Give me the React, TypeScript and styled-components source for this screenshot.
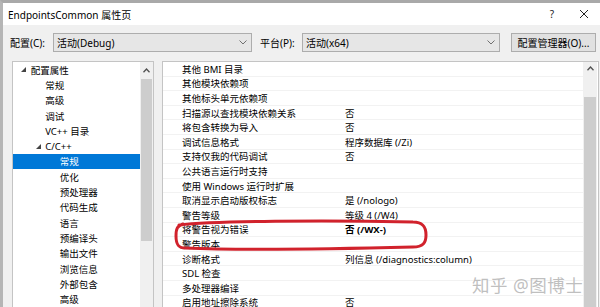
import React from 'react';
import styled, { createGlobalStyle } from 'styled-components';

const GlobalStyle = createGlobalStyle`
  html, body {
    margin: 0;
    padding: 0;
    overflow: hidden;
    background: #d9d9d9;
  }
  * {
    box-sizing: border-box;
  }
`;

const FONT = `"Noto Sans", "Noto Sans CJK SC", sans-serif`;

const Window = styled.div`
  position: relative;
  width: 600px;
  height: 307px;
  overflow: hidden;
  background: #f0f0f0;
  border-top: 3px solid #a9a9a9;
  border-left: 3px solid #b5b5b5;
  font-family: ${FONT};
  color: #000;
`;

const TitleBar = styled.div`
  height: 22px;
  background: #fff;
  display: flex;
  align-items: center;
  padding-left: 5px;
  font-size: 10px;
`;

const Title = styled.span`
  flex: 1;
`;

const TitleButton = styled.span`
  width: 32px;
  display: flex;
  justify-content: center;
  align-items: center;
  font-size: 10px;
  color: #222;
`;

const ConfigBar = styled.div`
  display: flex;
  align-items: center;
  padding: 8px 0 0 7px;
  height: 27px;
  font-size: 10px;
`;

const Label = styled.span<{ $w: number; $ml?: number }>`
  width: ${p => p.$w}px;
  margin-left: ${p => p.$ml || 0}px;
  white-space: nowrap;
`;

const Select = styled.div<{ $w: number }>`
  width: ${p => p.$w}px;
  height: 19px;
  background: #e6e6e6;
  border: 1px solid #adadad;
  display: flex;
  align-items: center;
  padding: 0 4px 0 3px;
  white-space: nowrap;
`;

const SelectText = styled.span`
  flex: 1;
`;

const Button = styled.div`
  width: 85px;
  height: 19px;
  margin-left: 11px;
  background: #e1e1e1;
  border: 1px solid #adadad;
  display: flex;
  align-items: center;
  justify-content: center;
  white-space: nowrap;
`;

const Main = styled.div`
  display: flex;
  gap: 8px;
  margin-top: 9px;
  padding-left: 9px;
`;

const Panel = styled.div<{ $w: number }>`
  width: ${p => p.$w}px;
  height: 260px;
  background: #fff;
  border: 1px solid #c4c4c4;
  display: flex;
  font-size: 9.5px;
`;

const TreeList = styled.div`
  width: 127px;
`;

const TreeRow = styled.div<{ $level: number; $selected?: boolean }>`
  height: 15.3px;
  display: flex;
  align-items: center;
  padding-left: ${p => 8 + p.$level * 14.5}px;
  background: ${p => (p.$selected ? '#0078d7' : 'transparent')};
  color: ${p => (p.$selected ? '#fff' : '#000')};
  white-space: nowrap;
`;

const Expander = styled.span`
  width: 9.7px;
  display: flex;
  align-items: center;
`;

const ScrollBar = styled.div<{ $w: number }>`
  width: ${p => p.$w}px;
  background: #f0f0f0;
  display: flex;
  flex-direction: column;
`;

const ScrollArrow = styled.div`
  height: 17px;
  display: flex;
  align-items: center;
  justify-content: center;
`;

const Thumb = styled.div<{ $top: number; $h: number }>`
  margin: ${p => p.$top}px 1px 0 1px;
  height: ${p => p.$h}px;
  background: #cdcdcd;
`;

const GridBody = styled.div`
  width: 420px;
`;

const GridRow = styled.div`
  height: 14.6px;
  display: flex;
  align-items: center;
  border-bottom: 1px solid #f2f2f2;
  white-space: nowrap;
`;

const NameCell = styled.span`
  width: 182px;
  padding-left: 19px;
`;

const ValueCell = styled.span<{ $bold?: boolean }>`
  flex: 1;
  font-weight: ${p => (p.$bold ? 700 : 400)};
`;

const Highlight = styled.svg`
  position: absolute;
  left: 170px;
  top: 214px;
`;

const Watermark = styled.div`
  position: absolute;
  left: 469px;
  top: 269px;
  font-size: 17.5px;
  color: rgba(170, 170, 170, 0.75);
  text-shadow: 0 0 2px rgba(255, 255, 255, 0.9);
  white-space: nowrap;
  letter-spacing: 0.5px;
`;

const Chevron = () => (
  <svg width="8" height="5" viewBox="0 0 8 5">
    <polyline points="0.5,0.5 4,4 7.5,0.5" fill="none" stroke="#707070" strokeWidth="1" />
  </svg>
);

const UpArrow = () => (
  <svg width="7" height="5" viewBox="0 0 7 5">
    <polyline points="0.5,4.2 3.5,1 6.5,4.2" fill="none" stroke="#505050" strokeWidth="1.3" />
  </svg>
);

const Triangle = () => (
  <svg width="5" height="5" viewBox="0 0 5 5">
    <polygon points="5,0 5,5 0,5" fill="#444" />
  </svg>
);

const CloseIcon = () => (
  <svg width="10" height="10" viewBox="0 0 10 10">
    <path d="M1 1 L9 9 M9 1 L1 9" stroke="#222" strokeWidth="1" />
  </svg>
);

const tree: { text: string; level: number; open?: boolean; selected?: boolean }[] = [
  { text: '配置属性', level: 0, open: true },
  { text: '常规', level: 1 },
  { text: '高级', level: 1 },
  { text: '调试', level: 1 },
  { text: 'VC++ 目录', level: 1 },
  { text: 'C/C++', level: 1, open: true },
  { text: '常规', level: 2, selected: true },
  { text: '优化', level: 2 },
  { text: '预处理器', level: 2 },
  { text: '代码生成', level: 2 },
  { text: '语言', level: 2 },
  { text: '预编译头', level: 2 },
  { text: '输出文件', level: 2 },
  { text: '浏览信息', level: 2 },
  { text: '外部包含', level: 2 },
  { text: '高级', level: 2 },
  { text: '所有选项', level: 2 },
];

const props: { name: string; value?: string; bold?: boolean }[] = [
  { name: '其他 BMI 目录' },
  { name: '其他模块依赖项' },
  { name: '其他标头单元依赖项' },
  { name: '扫描源以查找模块依赖关系', value: '否' },
  { name: '将包含转换为导入', value: '否' },
  { name: '调试信息格式', value: '程序数据库 (/Zi)' },
  { name: '支持仅我的代码调试', value: '否' },
  { name: '公共语言运行时支持' },
  { name: '使用 Windows 运行时扩展' },
  { name: '取消显示启动版权标志', value: '是 (/nologo)' },
  { name: '警告等级', value: '等级 4 (/W4)' },
  { name: '将警告视为错误', value: '否 (/WX-)', bold: true },
  { name: '警告版本' },
  { name: '诊断格式', value: '列信息 (/diagnostics:column)' },
  { name: 'SDL 检查' },
  { name: '多处理器编译' },
  { name: '启用地址擦除系统', value: '否' },
  { name: '启用模糊化支持', value: '否' },
];

const App: React.FC = () => {
  return (
    <Window>
      <GlobalStyle />
      <TitleBar>
        <Title>EndpointsCommon 属性页</Title>
        <TitleButton>?</TitleButton>
        <TitleButton>
          <CloseIcon />
        </TitleButton>
      </TitleBar>
      <ConfigBar>
        <Label $w={43}>配置(C):</Label>
        <Select $w={199}>
          <SelectText>活动(Debug)</SelectText>
          <Chevron />
        </Select>
        <Label $w={42} $ml={8}>平台(P):</Label>
        <Select $w={198}>
          <SelectText>活动(x64)</SelectText>
          <Chevron />
        </Select>
        <Button>配置管理器(O)...</Button>
      </ConfigBar>
      <Main>
        <Panel $w={142}>
          <TreeList>
            {tree.map((item, i) => (
              <TreeRow key={i} $level={item.level} $selected={item.selected}>
                <Expander>{item.open && <Triangle />}</Expander>
                {item.text}
              </TreeRow>
            ))}
          </TreeList>
          <ScrollBar $w={13}>
            <ScrollArrow>
              <UpArrow />
            </ScrollArrow>
            <Thumb $top={0} $h={162} />
          </ScrollBar>
        </Panel>
        <Panel $w={437}>
          <GridBody>
            {props.map((p, i) => (
              <GridRow key={i}>
                <NameCell>{p.name}</NameCell>
                <ValueCell $bold={p.bold}>{p.value}</ValueCell>
              </GridRow>
            ))}
          </GridBody>
          <ScrollBar $w={14}>
            <ScrollArrow>
              <UpArrow />
            </ScrollArrow>
            <Thumb $top={22} $h={300} />
          </ScrollBar>
        </Panel>
      </Main>
      <Highlight width="258" height="36" viewBox="0 0 258 36">
        <path
          d="M6 8 C40 4, 150 3, 240 5 C250 5, 253 10, 253 18 C253 26, 250 30, 240 30 C160 32, 60 33, 12 31 C5 31, 3 27, 3 19 C3 12, 4 9, 10 7"
          fill="none"
          stroke="#d1222c"
          strokeWidth="3"
          strokeLinecap="round"
        />
      </Highlight>
      <Watermark>知乎 @图博士</Watermark>
    </Window>
  );
};

export default App;
